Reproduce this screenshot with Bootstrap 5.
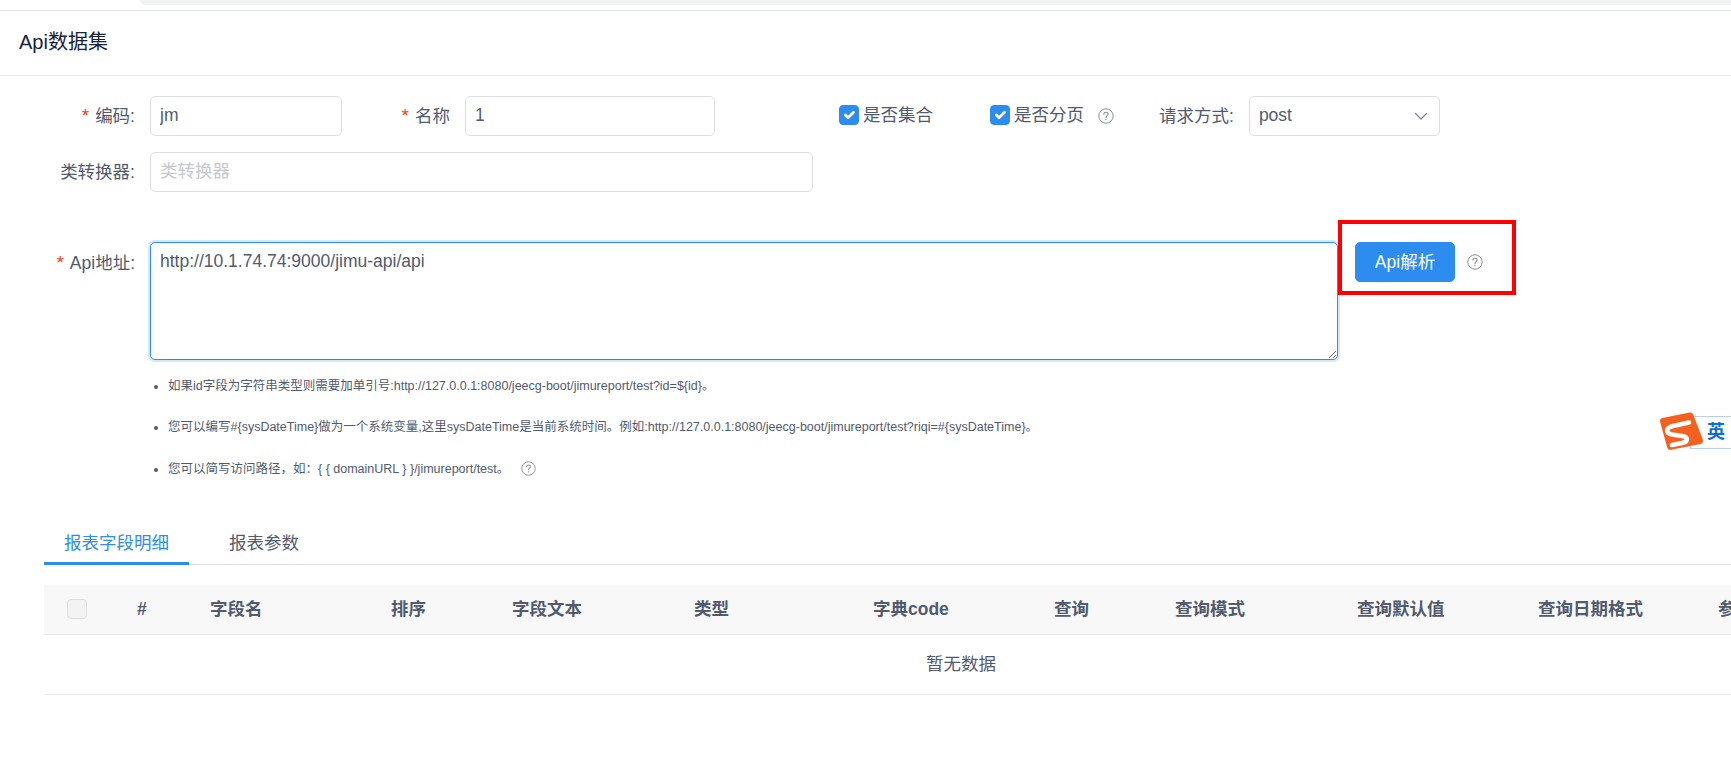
<!DOCTYPE html>
<html lang="zh">
<head>
  <meta charset="UTF-8">
  <title>Api数据集</title>
  <link href="https://cdn.jsdelivr.net/npm/bootstrap@5.3.0/dist/css/bootstrap.min.css" rel="stylesheet">
  <style>
    html, body { height: 100%; overflow: hidden; }
    body { font-family: "Liberation Sans", "Noto Sans CJK SC", sans-serif; font-size: 17.5px; color: #515a6e; background: #fff; position: relative; }

    .top-strip { height: 11px; border-bottom: 1px solid #e4e4e4; }
    .top-strip-bar { height: 5px; margin-left: 140px; background: #f1f2f4; border-bottom-left-radius: 8px; }
    .page-head { height: 65px; padding: 0 0 2px 19px; border-bottom: 1px solid #e8eaec; font-size: 20px; color: #17233d; }
    .form-wrap { padding-top: 20px; }

    .fld-label { width: 135px; height: 40px; line-height: 40px; text-align: right; margin-right: 15px; flex: none; white-space: nowrap; }
    .fld-label.w-name { width: 108px; }
    .fld-label.w-method { width: auto; margin-left: 45px; }
    .req { color: #ed4014; margin-right: 6px; font-size: 19px; font-family: "Liberation Sans", sans-serif; }
    .form-control.fld, .form-select.fld { height: 40px; font-size: 17.5px; color: #515a6e; border-color: #dcdee2; border-radius: 5px; padding: 0 9px 2px; box-shadow: none; }
    .form-control.fld::placeholder { color: #c5c8ce; }
    .fld-code { width: 192px; flex: none; }
    .form-control.fld-name { width: 250px; flex: none; }
    .fld-conv { width: 663px; flex: none; }
    .form-select.fld-method { width: 191px; flex: none; background-size: 16px; background-position: right 10px center; background-image: url("data:image/svg+xml,%3csvg xmlns='http://www.w3.org/2000/svg' viewBox='0 0 16 16'%3e%3cpath fill='none' stroke='%23808695' stroke-width='1.3' stroke-linecap='round' stroke-linejoin='round' d='M2.5 5.5l5.5 5.5 5.500-5.500'/%3e%3c/svg%3e"); }

    .chk { height: 40px; padding-bottom: 2px; }
    .chk .form-check-input { width: 20px; height: 20px; margin: 0 4px 0 0; border-radius: 4px; }
    .chk .form-check-input:checked { background-color: #2d8cf0; border-color: #2d8cf0; }
    .chk-a { margin-left: 124px; }
    .chk-b { margin-left: 57px; }
    .help-ic { width: 16px; height: 16px; flex: none; color: #8b8f98; }
    .help-a { margin-left: 14px; }

    .row-conv { margin-top: 16px; }
    .row-api { margin-top: 50px; }
    .row-api .fld-label { line-height: 42px; }
    .form-control.api-addr { width: 1188px; height: 118px; flex: none; font-size: 17.5px; line-height: 22px; color: #515a6e; padding: 7px 9px; border-color: #2d8cf0; border-radius: 5px; box-shadow: 0 0 0 2px rgba(45, 140, 240, .2); }
    .mark-box { width: 178px; height: 75px; margin-top: -22px; padding: 9px 0 0 13px; border: 4px solid #f00; flex: none; }
    .btn.btn-parse { width: 100px; height: 40px; padding: 0; font-size: 17.5px; color: #fff; background: #2d8cf0; border-color: #2d8cf0; border-radius: 5px; }
    .help-b { margin-left: 12px; }

    .hint-list { margin: 6px 0 0 150px; padding-left: 18px; font-size: 12.5px; }
    .hint-list li { height: 41px; line-height: 41px; white-space: nowrap; }
    .hint-list li:last-child { padding-top: 1px; }
    .help-c { width: 15px; height: 15px; margin-left: 12px; vertical-align: -3px; }

    .tabs-bar { margin: 26px 0 0 44px; height: 50px; border-bottom: 1px solid #dcdee2; }
    .tabs-bar .nav-link { height: 50px; padding: 0 20px; margin-right: 20px; line-height: 57px; font-size: 17.5px; color: #515a6e; border-radius: 0; }
    .tabs-bar .nav-link.active { color: #2d8cf0; border-bottom: 3px solid #2d8cf0; }

    .grid-wrap { margin: 20px 0 0 44px; overflow: hidden; }
    .fields-grid { width: 1834px; margin: 0; table-layout: fixed; font-size: 17.5px; color: #515a6e; }
    .fields-grid th { height: 49px; padding: 0 12px; vertical-align: middle; background: #f8f8f9; border-bottom: 1px solid #e8eaec; white-space: nowrap; font-weight: 700; color: #515a6e; }
    .fields-grid td { height: 60px; vertical-align: middle; text-align: center; color: #515a6e; border-bottom: 1px solid #e8eaec; }
    .fields-grid .form-check-input { width: 20px; height: 20px; margin: 0 0 0 11px; display: block; background-color: #f3f3f3; border-color: #dcdee2; border-radius: 4px; opacity: 1; }

    .ime-badge { position: absolute; left: 1658px; top: 411px; width: 73px; height: 40px; }
    .ime-panel { position: absolute; left: 32px; top: 5px; right: 0; height: 33px; padding-left: 16px; line-height: 31px; font-size: 18px; font-weight: 700; color: #0a6fd8; background: #fff; border: 1px solid #b9d0e8; border-right: 0; }
    .ime-logo { position: absolute; left: 0; top: 0; width: 46px; height: 40px; }
  </style>
</head>
<body>
  <svg class="d-none">
    <symbol id="help" viewBox="0 0 16 16">
      <circle cx="8" cy="8" r="7.2" fill="none" stroke="currentColor" stroke-width="1"/>
      <path fill="none" stroke="currentColor" stroke-width="1.1" stroke-linecap="round" d="M5.900 6.200c0-1.200 1-1.900 2.100-1.900s2.100.7 2.100 1.800c0 1.700-2.100 1.600-2.100 3.300"/>
      <circle cx="8" cy="11.500" r=".7" fill="currentColor"/>
    </symbol>
  </svg>

  <div class="top-strip"><div class="top-strip-bar"></div></div>
  <div class="page-head d-flex align-items-center">Api数据集</div>

  <form class="form-wrap">
    <div class="d-flex align-items-center">
      <label class="fld-label"><span class="req">*</span>编码:</label>
      <input type="text" class="form-control fld fld-code" value="jm">
      <label class="fld-label w-name"><span class="req">*</span>名称</label>
      <input type="text" class="form-control fld fld-name" value="1">
      <div class="chk chk-a d-flex align-items-center">
        <input class="form-check-input" type="checkbox" checked>
        <span>是否集合</span>
      </div>
      <div class="chk chk-b d-flex align-items-center">
        <input class="form-check-input" type="checkbox" checked>
        <span>是否分页</span>
      </div>
      <svg class="help-ic help-a"><use href="#help"/></svg>
      <label class="fld-label w-method">请求方式:</label>
      <select class="form-select fld fld-method">
        <option>post</option>
      </select>
    </div>

    <div class="row-conv d-flex align-items-center">
      <label class="fld-label">类转换器:</label>
      <input type="text" class="form-control fld fld-conv" placeholder="类转换器">
    </div>

    <div class="row-api d-flex align-items-start">
      <label class="fld-label"><span class="req">*</span>Api地址:</label>
      <textarea class="form-control api-addr">http://10.1.74.74:9000/jimu-api/api</textarea>
      <div class="mark-box d-flex align-items-center align-self-start">
        <button type="button" class="btn btn-parse">Api解析</button>
        <svg class="help-ic help-b"><use href="#help"/></svg>
      </div>
    </div>

    <ul class="hint-list">
      <li>如果id字段为字符串类型则需要加单引号:http://127.0.0.1:8080/jeecg-boot/jimureport/test?id=${id}。</li>
      <li>您可以编写#{sysDateTime}做为一个系统变量,这里sysDateTime是当前系统时间。例如:http://127.0.0.1:8080/jeecg-boot/jimureport/test?riqi=#{sysDateTime}。</li>
      <li>您可以简写访问路径，如：{ { domainURL } }/jimureport/test。<svg class="help-ic help-c"><use href="#help"/></svg></li>
    </ul>
  </form>

  <ul class="nav tabs-bar">
    <li class="nav-item"><a class="nav-link active" href="#">报表字段明细</a></li>
    <li class="nav-item"><a class="nav-link" href="#">报表参数</a></li>
  </ul>

  <div class="grid-wrap">
    <table class="table fields-grid">
      <colgroup>
        <col style="width:81px"><col style="width:73px"><col style="width:181px"><col style="width:121px"><col style="width:182px"><col style="width:179px"><col style="width:181px"><col style="width:121px"><col style="width:182px"><col style="width:181px"><col style="width:180px"><col>
      </colgroup>
      <thead>
        <tr>
          <th><input class="form-check-input" type="checkbox" disabled></th>
          <th>#</th>
          <th>字段名</th>
          <th>排序</th>
          <th>字段文本</th>
          <th>类型</th>
          <th>字典code</th>
          <th>查询</th>
          <th>查询模式</th>
          <th>查询默认值</th>
          <th>查询日期格式</th>
          <th>参数</th>
        </tr>
      </thead>
      <tbody>
        <tr><td colspan="12">暂无数据</td></tr>
      </tbody>
    </table>
  </div>

  <div class="ime-badge">
    <div class="ime-panel">英</div>
    <svg class="ime-logo" viewBox="0 0 46 40">
      <path fill="#f4611f" d="M2 10.500Q1.500 7.500 4.500 7L31.500 1.500Q34.500 1 35.300 3.800L44.800 28.500Q45.800 31.800 42.500 33L13 38.800Q10 39.500 9.200 36.500Z"/>
      <path fill="none" stroke="#fff" stroke-width="4.600" stroke-linecap="round" d="M31 11.500 15 15C8 16.500 7 22 14 23.500L24 25C31 26 30 31 24 32L14 34"/>
    </svg>
  </div>

  <script src="https://cdn.jsdelivr.net/npm/bootstrap@5.3.0/dist/js/bootstrap.bundle.min.js"></script>
</body>
</html>
